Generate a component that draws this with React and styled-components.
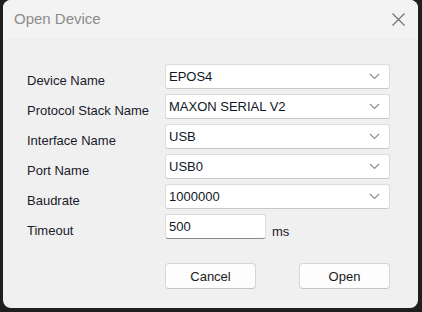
import React from "react";
import styled, { createGlobalStyle } from "styled-components";

const Global = createGlobalStyle`
  html, body { margin: 0; padding: 0; background: #1f1f1f; }
  body { font-family: "Liberation Sans", Arial, sans-serif; }
`;

const Desktop = styled.div`
  width: 422px;
  height: 312px;
  background: #1e1f1e;
  padding: 0 4px 4px 3px;
  box-sizing: border-box;
  display: flex;
`;

const Window = styled.div`
  flex: 1;
  background: #f0f0f0;
  border-radius: 8px;
  overflow: hidden;
  display: flex;
  flex-direction: column;
`;

const TitleBar = styled.div`
  height: 38px;
  background: #f3f3f3;
  display: flex;
  align-items: center;
  justify-content: space-between;
  padding: 0 13px 0 11px;
  flex-shrink: 0;
`;

const Title = styled.span`
  font-family: "Liberation Sans", Arial, sans-serif;
  font-size: 15px;
  color: #8c8c8c;
  padding-bottom: 2px;
`;

const Body = styled.div`
  flex: 1;
  padding: 26px 27px 0 24px;
  display: flex;
  flex-direction: column;
`;

const Form = styled.div`
  display: grid;
  grid-template-columns: 138px 225px;
  grid-auto-rows: 25px;
  row-gap: 5px;
  align-items: stretch;
`;

const Label = styled.div`
  font-size: 13px;
  color: #1a1a2a;
  display: flex;
  align-items: center;
  padding-top: 7px;
  white-space: nowrap;
`;

const Combo = styled.div`
  background: #fff;
  border: 1px solid #dcdcdc;
  border-bottom-color: #c8c8c8;
  border-radius: 3px;
  display: flex;
  align-items: center;
  justify-content: space-between;
  padding: 0 9px 0 3px;
  font-size: 13px;
  color: #101828;
  box-sizing: border-box;
`;

const TimeoutCell = styled.div`
  display: flex;
  align-items: stretch;
  gap: 6px;
`;

const Field = styled.div`
  width: 101px;
  background: #fff;
  border: 1px solid #dcdcdc;
  border-bottom: 1px solid #8a8a8a;
  border-radius: 3px;
  display: flex;
  align-items: center;
  padding: 0 3px;
  font-size: 13px;
  color: #101828;
  box-sizing: border-box;
`;

const Unit = styled.span`
  font-size: 13px;
  color: #1a1a2a;
  display: flex;
  align-items: center;
  padding-top: 10px;
`;

const Buttons = styled.div`
  margin-top: 24px;
  margin-left: 138px;
  width: 225px;
  display: flex;
  justify-content: space-between;
`;

const Button = styled.div`
  width: 91px;
  height: 26px;
  box-sizing: border-box;
  background: #fdfdfd;
  border: 1px solid #d6d6d6;
  border-bottom-color: #c4c4c4;
  border-radius: 4px;
  display: flex;
  align-items: center;
  justify-content: center;
  font-size: 13px;
  color: #1a1a1a;
`;

const Chevron = () => (
  <svg width="11" height="7" viewBox="0 0 11 7">
    <path d="M1 1 L5.5 5.5 L10 1" fill="none" stroke="#8a8a8a" strokeWidth="1.1" />
  </svg>
);

const CloseIcon = () => (
  <svg width="13" height="13" viewBox="0 0 13 13">
    <path d="M0.5 0.5 L12.5 12.5 M12.5 0.5 L0.5 12.5" stroke="#6f6f6f" strokeWidth="1.1" />
  </svg>
);

const rows = [
  ["Device Name", "EPOS4"],
  ["Protocol Stack Name", "MAXON SERIAL V2"],
  ["Interface Name", "USB"],
  ["Port Name", "USB0"],
  ["Baudrate", "1000000"],
];

export default function App() {
  return (
    <>
      <Global />
      <Desktop>
        <Window>
          <TitleBar>
            <Title>Open Device</Title>
            <CloseIcon />
          </TitleBar>
          <Body>
            <Form>
              {rows.map(([l, v]) => (
                <React.Fragment key={l}>
                  <Label>{l}</Label>
                  <Combo>
                    <span>{v}</span>
                    <Chevron />
                  </Combo>
                </React.Fragment>
              ))}
              <Label>Timeout</Label>
              <TimeoutCell>
                <Field>500</Field>
                <Unit>ms</Unit>
              </TimeoutCell>
            </Form>
            <Buttons>
              <Button>Cancel</Button>
              <Button>Open</Button>
            </Buttons>
          </Body>
        </Window>
      </Desktop>
    </>
  );
}
